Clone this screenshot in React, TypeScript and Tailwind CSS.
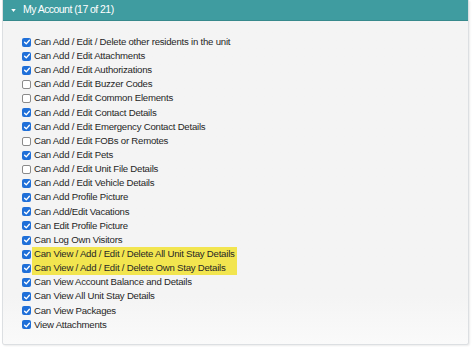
type Permission = { label: string; checked: boolean }

const before: Permission[] = [
  { label: 'Can Add / Edit / Delete other residents in the unit', checked: true },
  { label: 'Can Add / Edit Attachments', checked: true },
  { label: 'Can Add / Edit Authorizations', checked: true },
  { label: 'Can Add / Edit Buzzer Codes', checked: false },
  { label: 'Can Add / Edit Common Elements', checked: false },
  { label: 'Can Add / Edit Contact Details', checked: true },
  { label: 'Can Add / Edit Emergency Contact Details', checked: true },
  { label: 'Can Add / Edit FOBs or Remotes', checked: false },
  { label: 'Can Add / Edit Pets', checked: true },
  { label: 'Can Add / Edit Unit File Details', checked: false },
  { label: 'Can Add / Edit Vehicle Details', checked: true },
  { label: 'Can Add Profile Picture', checked: true },
  { label: 'Can Add/Edit Vacations', checked: true },
  { label: 'Can Edit Profile Picture', checked: true },
  { label: 'Can Log Own Visitors', checked: true },
]

// the two rows marked up in yellow
const highlighted: Permission[] = [
  { label: 'Can View / Add / Edit / Delete All Unit Stay Details', checked: true },
  { label: 'Can View / Add / Edit / Delete Own Stay Details', checked: true },
]

const after: Permission[] = [
  { label: 'Can View Account Balance and Details', checked: true },
  { label: 'Can View All Unit Stay Details', checked: true },
  { label: 'Can View Packages', checked: true },
  { label: 'View Attachments', checked: true },
]

function Box({ checked }: { checked: boolean }) {
  if (checked) {
    return (
      <span className="grid h-[9px] w-[9px] shrink-0 place-items-center rounded-[2px] bg-[#1f6fd8]">
        <svg viewBox="0 0 10 10" className="h-[8px] w-[8px]" fill="none">
          <path d="M2 5.2 4.1 7.3 8 2.8" stroke="#fff" strokeWidth="1.7" strokeLinecap="round" strokeLinejoin="round" />
        </svg>
      </span>
    )
  }
  return <span className="h-[9px] w-[9px] shrink-0 rounded-[2px] border border-[#8a8a8a] bg-white" />
}

function Row({ p }: { p: Permission }) {
  return (
    <div className="flex h-[14.15px] items-center gap-[3px]">
      <Box checked={p.checked} />
      <span>{p.label}</span>
    </div>
  )
}

export default function App() {
  return (
    <div className="h-[347px] w-[474px] bg-white pl-[2px] pr-[5px]" style={{ fontFamily: '"Liberation Sans", Arial, sans-serif' }}>
      <div className="flex h-[345px] flex-col overflow-hidden rounded-b-[3px] border border-t-0 border-[#dcdfe2] bg-[#f4f4f4] shadow-[1px_1px_2px_rgba(0,0,0,0.08)]">
        <div className="flex h-[21px] shrink-0 items-center gap-[7px] border-b border-[#37898c] bg-[#3f9ca0] pl-[8px] text-[10.5px] font-medium tracking-[-0.55px] text-white">
          <svg viewBox="0 0 6 4" className="h-[3px] w-[5px]">
            <path d="M0 0h6L3 4z" fill="#fff" />
          </svg>
          <span>My Account (17 of 21)</span>
        </div>
        <div className="flex flex-1 flex-col bg-gradient-to-b from-[#f4f4f4] from-85% to-[#fafafa] pl-[19px] pt-[14px] text-[9.6px] tracking-[-0.22px] text-[#262626]">
          {before.map((p) => (
            <Row key={p.label} p={p} />
          ))}
          <div className="flex">
            <div className="flex flex-col">
              {highlighted.map((p) => (
                <div key={p.label} className="flex h-[14.15px] items-center">
                  <Box checked={p.checked} />
                </div>
              ))}
            </div>
            <div className="ml-[1px] flex flex-col bg-[#f2e54f] pl-[2px] pr-[2px]">
              {highlighted.map((p) => (
                <div key={p.label} className="flex h-[14.15px] items-center">
                  {p.label}
                </div>
              ))}
            </div>
          </div>
          {after.map((p) => (
            <Row key={p.label} p={p} />
          ))}
        </div>
      </div>
    </div>
  )
}
